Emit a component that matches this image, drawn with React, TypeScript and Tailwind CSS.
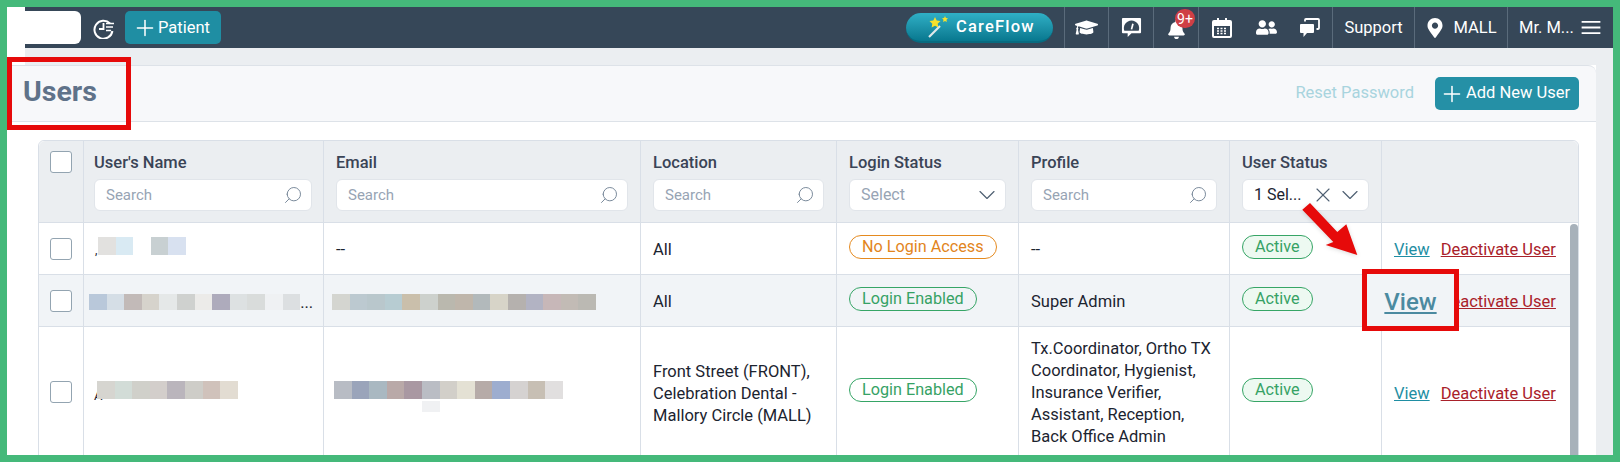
import { ChevronDown, Plus, Search, X } from "lucide-react";
import { FaBell, FaGraduationCap, FaMapMarkerAlt, FaUserFriends } from "react-icons/fa";

const Pixels = ({ colors, className }: { colors: string[]; className: string }) => (
  <div className={`relative flex ${className}`}>
    {colors.map((c, i) => (
      <div key={i} className={`h-full w-[17.6px] shrink-0 ${c}`} />
    ))}
  </div>
);

const NavCell = ({ children, className = "" }: { children: React.ReactNode; className?: string }) => (
  <div className={`flex h-full items-center justify-center border-r border-[#5a6b7b] ${className}`}>{children}</div>
);

const SearchBox = () => (
  <div className="flex h-8 items-center rounded-md border border-[#e1e5ea] bg-white pl-[11px] pr-[8px]">
    <input
      placeholder="Search"
      className="w-full min-w-0 bg-transparent text-[15px] outline-none placeholder:text-[#97a4b4]"
    />
    <Search size={20} strokeWidth={1.2} className="shrink-0 -scale-x-100 text-[#7b8b9c]" />
  </div>
);

const HeadCell = ({ label, children, className = "px-3" }: { label: string; children: React.ReactNode; className?: string }) => (
  <div className={`border-r border-[#d9dfe7] pt-[11px] ${className}`}>
    <div className="mb-[5px] text-[16.5px] font-medium leading-[22px] text-[#3a4456]">{label}</div>
    {children}
  </div>
);

const Check = () => (
  <div className="h-[22px] w-[22px] shrink-0 rounded-[3px] border border-[#93a4b1] bg-white" />
);

const Cell = ({ children, className = "" }: { children?: React.ReactNode; className?: string }) => (
  <div className={`flex items-center border-r border-[#d9dfe7] px-3 text-[16.5px] leading-[22px] text-[#1c2430] ${className}`}>
    {children}
  </div>
);

const Badge = ({ text, tone }: { text: string; tone: "orange" | "green" | "active" }) => {
  const tones = {
    orange: "border-[#e58a1f] text-[#e2851c]",
    green: "border-[#36a566] text-[#36a265]",
    active: "border-[#36a566] bg-[#edf9f1] text-[#36a265]",
  };
  return (
    <span className={`mb-1 inline-flex h-6 items-center whitespace-nowrap rounded-full border px-3 text-[16.2px] ${tones[tone]}`}>{text}</span>
  );
};

const Actions = ({ className = "pt-[2px]" }: { className?: string }) => (
  <div className={`flex items-center gap-[11px] pl-3 text-[16.5px] leading-[22px] ${className}`}>
    <a className="text-[#1f8ea3] underline">View</a>
    <a className="whitespace-nowrap text-[#a9212a] underline">Deactivate User</a>
  </div>
);

const COLS = "grid grid-cols-[45px_240px_317px_196px_182px_211px_152px_196px]";

export default function App() {
  return (
    <div className="relative h-[462px] w-[1620px] overflow-hidden border-[7px] border-[#45b97a] bg-white font-['Roboto',sans-serif]">
      {/* top bar */}
      <div className="ml-[18px] flex h-[41px] items-center bg-[#364758] text-[16.5px] text-white">
        <div className="h-[33px] w-[56px] rounded-r-md bg-white" />
        <svg viewBox="0 0 22 22" className="ml-3 h-[22px] w-[22px]" fill="none">
          <path d="M17 6.500A9 9 0 1 0 19.400 14" stroke="#fff" strokeWidth="2" />
          <path d="M10.500 6v6H6" stroke="#fff" strokeWidth="1.800" />
          <path d="M13 6.500h8M13 10h7M13 13.500h5" stroke="#fff" strokeWidth="1.700" />
        </svg>
        <button className="ml-[10px] flex h-[33px] w-[96px] items-center rounded-[5px] bg-[#1f8ea3] pl-[7px]">
          <Plus size={26} strokeWidth={1.4} />
          <span className="pt-px">Patient</span>
        </button>
        <div className="ml-auto flex h-full items-center">
          <button className="mr-[11px] flex h-[30px] w-[147px] items-center rounded-full border-b-2 border-[#076b80] bg-gradient-to-b from-[#2fb0c6] to-[#07788f] pl-5 font-medium tracking-[1.2px]">
            <svg viewBox="0 0 24 24" className="mr-[6px] h-6 w-6">
              <path d="M3 22 14 11" stroke="#dfe9ea" strokeWidth="2.200" />
              <path d="m9 2 1.700 3.500 3.800.5-2.800 2.700.7 3.800L9 10.700l-3.400 1.800.7-3.800L3.500 6l3.800-.5z" fill="#f7e12b" />
              <path d="m19 1 .9 2 2.100.3-1.500 1.500.3 2.200-1.800-1-1.900 1 .4-2.200-1.500-1.500 2.100-.3z" fill="#f7e12b" />
            </svg>
            <span className="pt-[2px]">CareFlow</span>
          </button>
          <NavCell className="w-[45px] border-l">
            <FaGraduationCap size={23} />
          </NavCell>
          <NavCell className="w-[45px]">
            <svg viewBox="0 0 22 22" className="h-[21px] w-[21px]">
              <path fillRule="evenodd" fill="#fff" d="M2 1h18a1 1 0 0 1 1 1v14a1 1 0 0 1-1 1h-9l-4 4v-4H2a1 1 0 0 1-1-1V2a1 1 0 0 1 1-1Zm1.500 13.500h15a8 8 0 1 0-15 0Z" />
              <path d="m11 13 1.500-6" stroke="#fff" strokeWidth="1.800" />
            </svg>
          </NavCell>
          <NavCell className="relative w-[45px]">
            <FaBell size={19} className="mt-[3px]" />
            <span className="absolute left-[21px] top-[2px] flex h-[19px] w-[20px] items-center justify-center rounded-full bg-[#cf3f45] text-[14px] leading-none">
              9+
            </span>
          </NavCell>
          <div className="flex h-full w-[45px] items-center justify-center">
            <svg viewBox="0 0 20 20" className="h-[20px] w-[20px]">
              <path fillRule="evenodd" fill="#fff" d="M2 2h3V0h2v2h6V0h2v2h3a2 2 0 0 1 2 2v14a2 2 0 0 1-2 2H2a2 2 0 0 1-2-2V4a2 2 0 0 1 2-2Zm0 6v10h16V8Z" />
              <path d="M5 10.500h10M5 13h10M5 15.500h10" stroke="#fff" strokeWidth="1.600" strokeDasharray="2 1.500" />
            </svg>
          </div>
          <div className="flex h-full w-[44px] items-center justify-center">
            <FaUserFriends size={21} />
          </div>
          <NavCell className="w-[45px]">
            <svg viewBox="0 0 20 20" className="h-[20px] w-[20px]">
              <path fill="#fff" d="M1 6h12a1 1 0 0 1 1 1v7a1 1 0 0 1-1 1H7l-3.500 4v-4H1a1 1 0 0 1-1-1V7a1 1 0 0 1 1-1Z" />
              <path fill="none" stroke="#fff" strokeWidth="1.800" d="M5 3.500V2a1 1 0 0 1 1-1h12a1 1 0 0 1 1 1v8a1 1 0 0 1-1 1h-1.500" />
            </svg>
          </NavCell>
          <NavCell className="w-[82px] pt-px">Support</NavCell>
          <NavCell className="w-[93px] gap-2">
            <FaMapMarkerAlt size={20} />
            <span className="pt-px">MALL</span>
          </NavCell>
          <div className="flex h-full w-[105px] items-center pl-[11px]">
            <span className="pt-px">Mr. M...</span>
            <svg viewBox="0 0 20 16" className="ml-[7px] h-[15px] w-[20px]">
              <path d="M0 2h20M0 8h20M0 14h20" stroke="#fff" strokeWidth="2" />
            </svg>
          </div>
        </div>
      </div>

      <div className="ml-[18px] h-[17px] bg-[#ebeef1]" />

      <div className="flex">
        {/* card */}
        <div className="h-[400px] flex-1 bg-white">
          <div className="flex h-[57px] items-center justify-between rounded-tr-lg border-y border-[#dde2e8] bg-[#f7f8fa] pl-4 pr-[17px]">
            <h1 className="-mt-[2px] text-[28.500px] font-bold text-[#5f7289]">Users</h1>
            <div className="flex items-center gap-[21px] text-[16.5px]">
              <span className="text-[#a8d4de]">Reset Password</span>
              <button className="flex h-[33px] w-[144px] items-center rounded-[5px] bg-[#2590a6] pl-[4px] text-white">
                <Plus size={26} strokeWidth={1.4} />
                <span className="ml-px">Add New User</span>
              </button>
            </div>
          </div>

          <div className="relative ml-[31px] mt-[18px] w-[1541px] rounded-t-md border border-[#d9dfe7]">
            <div className={`${COLS} h-[82px] rounded-t-md border-b border-[#d9dfe7] bg-[#ebeef1]`}>
              <div className="border-r border-[#d9dfe7] pl-[11px] pt-[10px]">
                <Check />
              </div>
              <HeadCell label="User's Name" className="pl-[10px] pr-[11px]">
                <SearchBox />
              </HeadCell>
              <HeadCell label="Email">
                <SearchBox />
              </HeadCell>
              <HeadCell label="Location">
                <SearchBox />
              </HeadCell>
              <HeadCell label="Login Status">
                <div className="flex h-8 items-center justify-between rounded-md border border-[#e1e5ea] bg-white pl-[11px] pr-[4px] text-[16px] text-[#97a4b4]">
                  Select
                  <ChevronDown size={28} strokeWidth={1} className="text-[#4f6072]" />
                </div>
              </HeadCell>
              <HeadCell label="Profile">
                <SearchBox />
              </HeadCell>
              <HeadCell label="User Status">
                <div className="flex h-8 items-center rounded-md border border-[#e1e5ea] bg-white pl-[11px] pr-[4px] text-[16px] text-[#1c2430]">
                  1 Sel...
                  <X size={24} strokeWidth={1.1} className="ml-auto text-[#4f6072]" />
                  <ChevronDown size={28} strokeWidth={1} className="ml-px text-[#4f6072]" />
                </div>
              </HeadCell>
              <div />
            </div>

            <div className={`${COLS} h-[52px] border-b border-[#d9dfe7]`}>
              <Cell className="!pl-[11px]">
                <Check />
              </Cell>
              <Cell className="relative !pl-[14px]">
                <span className="absolute left-[11px] top-[16px] text-[12px]">,</span>
                <Pixels
                  className="mb-[5px] h-[18px]"
                  colors={["bg-[#e2e1df]", "bg-[#d9eaf3]", "bg-white", "bg-[#c8d0d2]", "bg-[#d8e1f0]"]}
                />
              </Cell>
              <Cell className="pt-[2px]">--</Cell>
              <Cell className="pt-[2px]">All</Cell>
              <Cell>
                <Badge text="No Login Access" tone="orange" />
              </Cell>
              <Cell className="pt-[2px]">--</Cell>
              <Cell>
                <Badge text="Active" tone="active" />
              </Cell>
              <Actions />
            </div>

            <div className={`${COLS} h-[52px] border-b border-[#d9dfe7] bg-[#f1f4f7]`}>
              <Cell className="!pl-[11px]">
                <Check />
              </Cell>
              <Cell className="!pl-[5px]">
                <Pixels
                  className="mt-[3px] h-4"
                  colors={[
                    "bg-[#b9c8da]", "bg-[#d5dee6]", "bg-[#c2bab8]", "bg-[#d6d3cc]", "bg-[#e5e8e8]", "bg-[#cfd1cf]",
                    "bg-[#ecebe9]", "bg-[#aeabbc]", "bg-[#dde1e2]", "bg-[#d9dcdb]", "bg-[#eff1f3]", "bg-[#dcdfe1]",
                  ]}
                />
                <span className="mt-1 text-[#1c2430]">...</span>
              </Cell>
              <Cell className="!pl-2">
                <Pixels
                  className="mt-[3px] h-4"
                  colors={[
                    "bg-[#d4d5d0]", "bg-[#bcc9d0]", "bg-[#b9c7cc]", "bg-[#b7ccd2]", "bg-[#cabfab]",
                    "bg-[#cdd1cd]", "bg-[#bab8ae]", "bg-[#bfb6ab]", "bg-[#b2b9bb]", "bg-[#d7d4c8]",
                    "bg-[#b5b1ae]", "bg-[#b2b3c3]", "bg-[#c7b7b8]", "bg-[#c2bbb5]", "bg-[#bbb9b3]",
                  ]}
                />
              </Cell>
              <Cell className="pt-[2px]">All</Cell>
              <Cell>
                <Badge text="Login Enabled" tone="green" />
              </Cell>
              <Cell className="pt-[2px]">Super Admin</Cell>
              <Cell>
                <Badge text="Active" tone="active" />
              </Cell>
              <Actions />
            </div>

            <div className={`${COLS} h-[130px]`}>
              <Cell className="!pl-[11px]">
                <Check />
              </Cell>
              <Cell className="relative !pl-[13px]">
                <span className="absolute left-[10px] top-[58px] text-[13px]">A</span>
                <Pixels
                  className="mb-[5px] h-[18px]"
                  colors={[
                    "bg-[#d6d5d0]", "bg-[#d2dcd7]", "bg-[#d0d0ca]", "bg-[#d3cecb]",
                    "bg-[#bab5bc]", "bg-[#cecdc8]", "bg-[#d0c2bb]", "bg-[#e2dcd2]",
                  ]}
                />
              </Cell>
              <Cell className="relative !pl-[10px]">
                <Pixels
                  className="mb-[5px] h-[18px]"
                  colors={[
                    "bg-[#b8bcc4]", "bg-[#9aa4ba]", "bg-[#a9b8c1]", "bg-[#b9a9a8]", "bg-[#a998a2]", "bg-[#babdc4]", "bg-[#d2cfc9]",
                    "bg-[#e4e1d4]", "bg-[#b6aba8]", "bg-[#9dadcf]", "bg-[#d5d2d1]", "bg-[#c7bfb4]", "bg-[#e1dfdf]",
                  ]}
                />
                <div className="absolute left-[98px] top-[74px] h-[11px] w-[18px] bg-[#f0f1f3]" />
              </Cell>
              <Cell className="pt-1">
                <span className="whitespace-nowrap">
                  Front Street (FRONT),
                  <br />
                  Celebration Dental -
                  <br />
                  Mallory Circle (MALL)
                </span>
              </Cell>
              <Cell>
                <Badge text="Login Enabled" tone="green" />
              </Cell>
              <Cell className="pt-[2px]">
                <span className="whitespace-nowrap">
                  Tx.Coordinator, Ortho TX
                  <br />
                  Coordinator, Hygienist,
                  <br />
                  Insurance Verifier,
                  <br />
                  Assistant, Reception,
                  <br />
                  Back Office Admin
                </span>
              </Cell>
              <Cell>
                <Badge text="Active" tone="active" />
              </Cell>
              <Actions className="pt-[3px]" />
            </div>

            {/* scrollbar */}
            <div className="absolute bottom-0 right-0 top-[83px] w-2 rounded-t bg-[#a7b1ba]" />
          </div>
        </div>
        <div className="h-[400px] w-[17px] bg-[#ebeef1]" />
      </div>

      {/* annotations */}
      <div className="absolute left-0 top-[50px] h-[73px] w-[124px] border-[5px] border-[#e60a0a]" />
      <div className="absolute left-[1355px] top-[262px] flex h-[62px] w-[97px] items-center justify-center border-[5px] border-[#e60a0a] bg-[#f1f4f7]">
        <span className="mt-1 text-[24px] font-medium text-[#4b8aa0] underline">View</span>
      </div>
      <svg viewBox="0 0 60 60" className="absolute left-[1293px] top-[193px] h-[60px] w-[60px] drop-shadow-sm">
        <path d="M2.300 9.700 10 3l27.300 29 9-7.700 11 30.700-31.600-10L33.300 42 2.300 9.700Z" fill="#e60a0a" />
      </svg>
    </div>
  );
}
